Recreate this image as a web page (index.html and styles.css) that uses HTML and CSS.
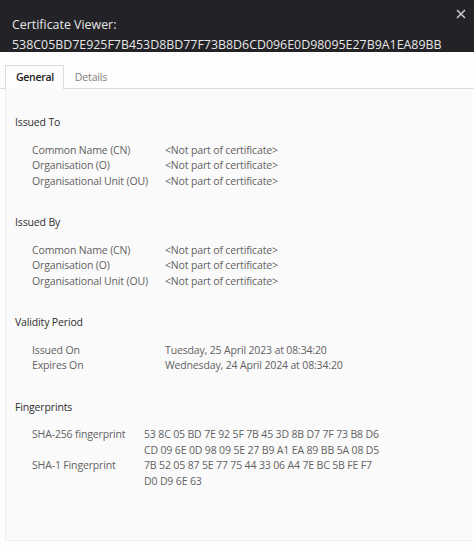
FILE: index.html
```html
<!DOCTYPE html>
<html lang="en">
<head>
<meta charset="utf-8">
<title>Certificate Viewer</title>
<link rel="stylesheet" href="styles.css">
</head>
<body>
<div class="dialog">
  <header class="titlebar">
    <div class="title">
      <div class="title-line">Certificate Viewer:</div>
      <div class="title-line">538C05BD7E925F7B453D8BD77F73B8D6CD096E0D98095E27B9A1EA89BB</div>
    </div>
    <button class="close" aria-label="Close">
      <svg width="10" height="10" viewBox="0 0 10 10"><path d="M1 1 L9 9 M9 1 L1 9" stroke="#c8c8c8" stroke-width="1.6" fill="none"/></svg>
    </button>
  </header>
  <nav class="tabs">
    <div class="tab active">General</div>
    <div class="tab">Details</div>
  </nav>
  <main class="panel">
    <section class="group">
      <h2 class="heading">Issued To</h2>
      <div class="rows">
        <div class="label">Common Name (CN)</div><div class="value">&lt;Not part of certificate&gt;</div>
        <div class="label">Organisation (O)</div><div class="value">&lt;Not part of certificate&gt;</div>
        <div class="label">Organisational Unit (OU)</div><div class="value">&lt;Not part of certificate&gt;</div>
      </div>
    </section>
    <section class="group">
      <h2 class="heading">Issued By</h2>
      <div class="rows">
        <div class="label">Common Name (CN)</div><div class="value">&lt;Not part of certificate&gt;</div>
        <div class="label">Organisation (O)</div><div class="value">&lt;Not part of certificate&gt;</div>
        <div class="label">Organisational Unit (OU)</div><div class="value">&lt;Not part of certificate&gt;</div>
      </div>
    </section>
    <section class="group">
      <h2 class="heading">Validity Period</h2>
      <div class="rows">
        <div class="label">Issued On</div><div class="value">Tuesday, 25 April 2023 at 08:34:20</div>
        <div class="label">Expires On</div><div class="value">Wednesday, 24 April 2024 at 08:34:20</div>
      </div>
    </section>
    <section class="group">
      <h2 class="heading">Fingerprints</h2>
      <div class="rows fp">
        <div class="label">SHA-256 fingerprint</div><div class="value">53 8C 05 BD 7E 92 5F 7B 45 3D 8B D7 7F 73 B8 D6<br>CD 09 6E 0D 98 09 5E 27 B9 A1 EA 89 BB 5A 08 D5</div>
        <div class="label">SHA-1 Fingerprint</div><div class="value">7B 52 05 87 5E 77 75 44 33 06 A4 7E BC 5B FE F7<br>D0 D9 6E 63</div>
      </div>
    </section>
  </main>
</div>
</body>
</html>
```
FILE: styles.css
```css
* { box-sizing: border-box; }
html, body { margin: 0; padding: 0; }
body {
  width: 474px;
  height: 545px;
  overflow: hidden;
  background: #fdfdfd;
  font-family: "Open Sans", "Noto Sans", sans-serif;
}
.dialog {
  display: flex;
  flex-direction: column;
  height: 545px;
}
.titlebar {
  background: #232327;
  color: #e6e6e6;
  height: 52px;
  display: flex;
  justify-content: space-between;
  padding: 0 0 0 12px;
  overflow: hidden;
}
.title {
  padding-top: 15px;
}
.title-line {
  font-size: 12.4px;
  line-height: 20px;
}
.close {
  background: none;
  border: 0;
  padding: 0;
  margin: 9px 8px 0 0;
  width: 10px;
  height: 10px;
  display: flex;
}
.tabs {
  display: flex;
  margin-top: 13px;
  padding-left: 5px;
  border-bottom: 1px solid #dcdcdc;
  height: 24px;
}
.tab {
  font-size: 10.5px;
  letter-spacing: -0.15px;
  color: #808080;
  padding: 0 9px 0 10px;
  line-height: 22px;
  margin-bottom: -1px;
  border: 1px solid transparent;
  border-bottom: 0;
}
.tab.active {
  color: #222;
  font-weight: 600;
  letter-spacing: -0.3px;
  background: #fdfdfd;
  border-color: #dcdcdc;
  height: 24px;
}
.panel {
  flex: 1;
  margin: 0 2px 4px 5px;
  border-left: 1px solid #efefef;
  border-bottom: 1px solid #efefef;
  background: #fafafa;
  padding: 26px 0 0 9px;
  display: flex;
  flex-direction: column;
  gap: 26px;
}
.heading {
  margin: 0 0 12px 0;
  font-size: 10.5px;
  letter-spacing: -0.15px;
  font-weight: 400;
  color: #2e2e2e;
  line-height: 15.5px;
}
.rows {
  display: grid;
  grid-template-columns: 133px auto;
  padding-left: 17px;
  font-size: 10.5px;
  letter-spacing: -0.15px;
  line-height: 15.5px;
  color: #626262;
}
.rows.fp { grid-template-columns: 112px auto; }
```
